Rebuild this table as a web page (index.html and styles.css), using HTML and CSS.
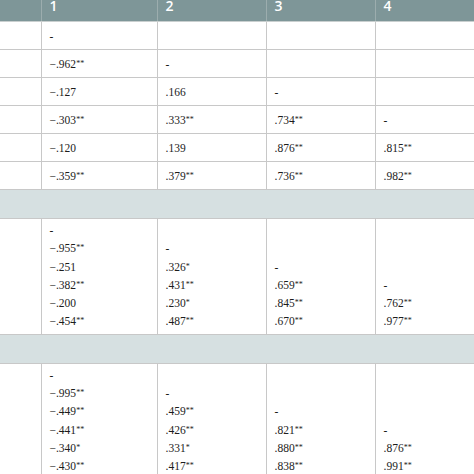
FILE: index.html
```html
<!DOCTYPE html>
<html>
<head>
<meta charset="utf-8">
<link rel="stylesheet" href="styles.css">
</head>
<body>
<table class="corr">
<colgroup><col class="c0"><col class="c1"><col class="c2"><col class="c3"><col class="c4"></colgroup>
<thead>
<tr><th></th><th>1</th><th>2</th><th>3</th><th>4</th></tr>
</thead>
<tbody>
<tr><td></td><td>-</td><td></td><td></td><td></td></tr>
<tr><td></td><td>−.962<span class="sig">**</span></td><td>-</td><td></td><td></td></tr>
<tr><td></td><td>−.127</td><td>.166</td><td>-</td><td></td></tr>
<tr><td></td><td>−.303<span class="sig">**</span></td><td>.333<span class="sig">**</span></td><td>.734<span class="sig">**</span></td><td>-</td></tr>
<tr><td></td><td>−.120</td><td>.139</td><td>.876<span class="sig">**</span></td><td>.815<span class="sig">**</span></td></tr>
<tr><td></td><td>−.359<span class="sig">**</span></td><td>.379<span class="sig">**</span></td><td>.736<span class="sig">**</span></td><td>.982<span class="sig">**</span></td></tr>
<tr class="band"><td colspan="5"></td></tr>
<tr class="multi">
<td></td>
<td>-<br>−.955<span class="sig">**</span><br>−.251<br>−.382<span class="sig">**</span><br>−.200<br>−.454<span class="sig">**</span></td>
<td>-<br>.326<span class="sig">*</span><br>.431<span class="sig">**</span><br>.230<span class="sig">*</span><br>.487<span class="sig">**</span></td>
<td>-<br>.659<span class="sig">**</span><br>.845<span class="sig">**</span><br>.670<span class="sig">**</span></td>
<td>-<br>.762<span class="sig">**</span><br>.977<span class="sig">**</span></td>
</tr>
<tr class="band"><td colspan="5"></td></tr>
<tr class="multi">
<td></td>
<td>-<br>−.995<span class="sig">**</span><br>−.449<span class="sig">**</span><br>−.441<span class="sig">**</span><br>−.340<span class="sig">*</span><br>−.430<span class="sig">**</span></td>
<td>-<br>.459<span class="sig">**</span><br>.426<span class="sig">**</span><br>.331<span class="sig">*</span><br>.417<span class="sig">**</span></td>
<td>-<br>.821<span class="sig">**</span><br>.880<span class="sig">**</span><br>.838<span class="sig">**</span></td>
<td>-<br>.876<span class="sig">**</span><br>.991<span class="sig">**</span></td>
</tr>
</tbody>
</table>
</body>
</html>
```
FILE: styles.css
```css
html, body {
  margin: 0;
  padding: 0;
  background: #ffffff;
  overflow: hidden;
}
.corr {
  border-collapse: collapse;
  table-layout: fixed;
  width: 540px;
  font-family: "Liberation Serif", "Times New Roman", serif;
  font-size: 11.5px;
  color: #1c1c1c;
}
.c0 { width: 41px; }
.c1 { width: 116px; }
.c2 { width: 109px; }
.c3 { width: 109px; }
.c4 { width: 165px; }
.corr th {
  background: #7e9698;
  color: #ffffff;
  font-family: "Open Sans", "DejaVu Sans", sans-serif;
  font-weight: 600;
  font-size: 14px;
  line-height: 12px;
  text-align: left;
  padding: 0 8px 9px;
  border-left: 1px solid #9cadae;
  border-bottom: 1px solid #c9cfcf;
}
.corr th:first-child { border-left: none; }
.corr td {
  padding: 5px 8px 4px;
  line-height: 18px;
  border: 1px solid #c8c8c8;
  vertical-align: bottom;
  white-space: nowrap;
}
.corr td:first-child { border-left: none; }
.corr td:last-child { border-right: none; }
.band td {
  background: #d6e0e1;
  height: 28px;
  padding: 0;
  border-left: none;
  border-right: none;
}
.multi td {
  padding: 2px 8px 3px;
  line-height: 18.3px;
}
.sig {
  font-size: 8px;
  vertical-align: 2px;
  line-height: 0;
}
```
